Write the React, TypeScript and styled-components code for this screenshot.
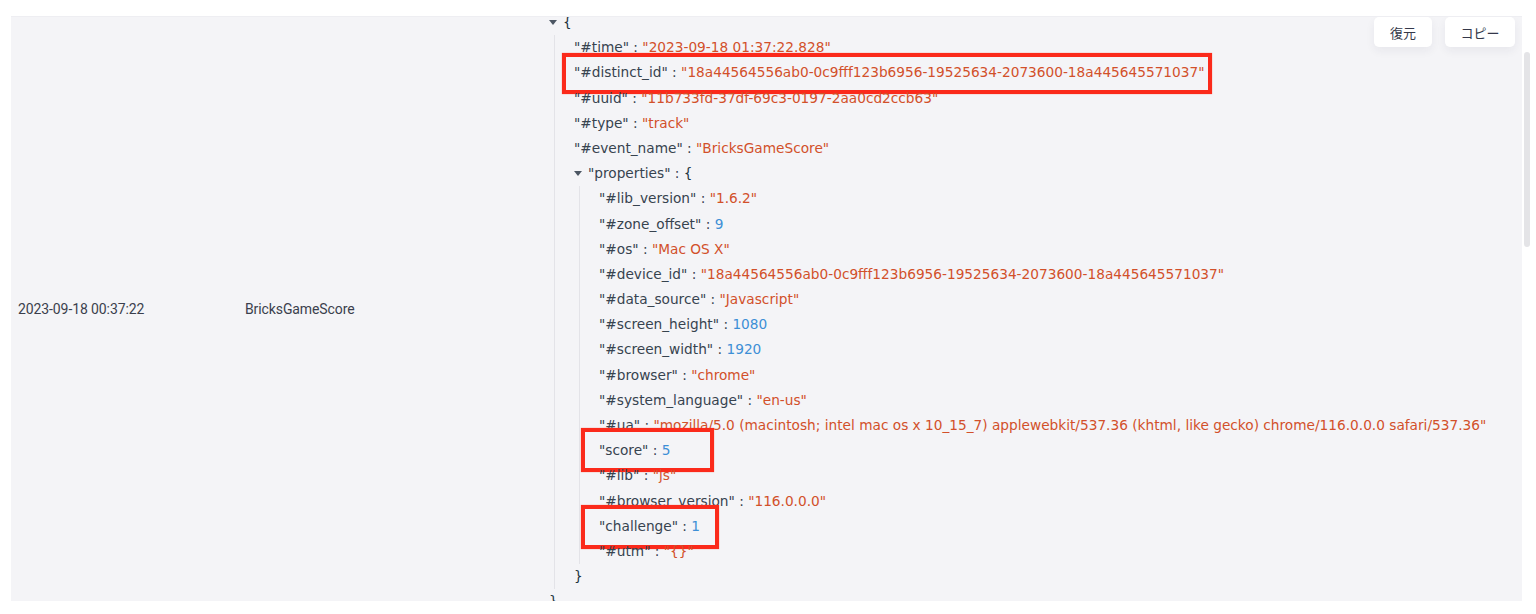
import styled, { createGlobalStyle } from "styled-components";

const GlobalStyle = createGlobalStyle`
    html, body {
        margin: 0;
        padding: 0;
        background: #ffffff;
    }
    body {
        font-family: Roboto, "Noto Sans", "Noto Sans CJK JP", sans-serif;
    }
`

const Page = styled.div`
    display: flex;
    height: 614px;
    padding: 16px 0 13px 11px;
    box-sizing: border-box;
    overflow: hidden;
`

const Panel = styled.div`
    position: relative;
    flex: 1;
    background: #f4f4f7;
    border-top: 1px solid #eeeef2;
    overflow: hidden;
`

const ScrollTrack = styled.div`
    width: 14px;
    padding: 36px 0 0 2px;
    box-sizing: border-box;
`

const ScrollThumb = styled.div`
    width: 6px;
    height: 195px;
    border-radius: 3px;
    background: #e4e4e7;
`

const Row = styled.div`
    display: grid;
    grid-template-columns: 227px 304px 1fr;
    grid-template-rows: 100%;
    align-items: center;
    height: 100%;
    padding-left: 7px;
`

const Cell = styled.div`
    font-size: 14px;
    color: #3b3f4d;
    letter-spacing: -0.1px;
`

const Actions = styled.div`
    position: absolute;
    top: 0;
    right: 7px;
    display: flex;
    gap: 13px;
`

const ActionButton = styled.button<{ w: number }>`
    width: ${props => props.w}px;
    height: 30px;
    border: none;
    border-radius: 5px;
    background: #ffffff;
    box-shadow: 0 4px 10px rgba(30, 30, 60, 0.06);
    font-family: "Noto Sans CJK JP", sans-serif;
    font-size: 13px;
    color: #34384a;
    cursor: pointer;
`

const Tree = styled.div`
    margin-top: -7px;
    align-self: start;
    font-family: "DejaVu Sans", sans-serif;
    font-size: 13.7px;
    line-height: 25.2px;
    color: #37434f;
    white-space: nowrap;
`

const Line = styled.div`
    height: 25.2px;
`

const LineText = styled.span`
    position: relative;
    display: inline-block;
`

const Arrow = styled.span`
    display: inline-block;
    width: 0;
    height: 0;
    margin: 0 6px 2px 0;
    border-left: 4px solid transparent;
    border-right: 4px solid transparent;
    border-top: 5px solid #4c5663;
    vertical-align: middle;
`

const Children = styled.div`
    margin-left: 5px;
    padding-left: 19px;
    border-left: 1px solid #e3e3e8;
`

const Brace = styled.span`
    color: #22333d;
`

const Key = styled.span`
    color: #37434f;
`

const Colon = styled.span`
    color: #37434f;
`

const Str = styled.span`
    color: #d2502a;
`

const Num = styled.span`
    color: #3d8fd6;
`

const Mark = styled.span<{ l: number; r: number; t: number; b: number }>`
    position: absolute;
    left: ${props => props.l}px;
    right: ${props => props.r}px;
    top: ${props => props.t}px;
    bottom: ${props => props.b}px;
    border: 4px solid #fb2a1b;
    box-shadow: 0 0 1px rgba(251, 42, 27, 0.6);
    pointer-events: none;
`

type Box = { l: number; r: number; t: number; b: number }
type Entry = { k: string; v: string | number; box?: Box }

const top: Entry[] = [
    { k: "#time", v: "2023-09-18 01:37:22.828" },
    { k: "#distinct_id", v: "18a44564556ab0-0c9fff123b6956-19525634-2073600-18a445645571037", box: { l: -12, r: -8, t: -7, b: -8 } },
    { k: "#uuid", v: "11b733fd-37df-69c3-0197-2aa0cd2ccb63" },
    { k: "#type", v: "track" },
    { k: "#event_name", v: "BricksGameScore" },
]

const props: Entry[] = [
    { k: "#lib_version", v: "1.6.2" },
    { k: "#zone_offset", v: 9 },
    { k: "#os", v: "Mac OS X" },
    { k: "#device_id", v: "18a44564556ab0-0c9fff123b6956-19525634-2073600-18a445645571037" },
    { k: "#data_source", v: "Javascript" },
    { k: "#screen_height", v: 1080 },
    { k: "#screen_width", v: 1920 },
    { k: "#browser", v: "chrome" },
    { k: "#system_language", v: "en-us" },
    { k: "#ua", v: "mozilla/5.0 (macintosh; intel mac os x 10_15_7) applewebkit/537.36 (khtml, like gecko) chrome/116.0.0.0 safari/537.36" },
    { k: "score", v: 5, box: { l: -18, r: -44, t: -10, b: -9 } },
    { k: "#lib", v: "js" },
    { k: "#browser_version", v: "116.0.0.0" },
    { k: "challenge", v: 1, box: { l: -18, r: -19, t: -9, b: -10 } },
    { k: "#utm", v: "{}" },
]

function Pair({ e }: { e: Entry }) {
    return (
        <Line>
            <LineText>
                <Key>"{e.k}"</Key>
                <Colon> : </Colon>
                {typeof e.v === "number" ? <Num>{e.v}</Num> : <Str>"{e.v}"</Str>}
                {e.box && <Mark {...e.box} />}
            </LineText>
        </Line>
    )
}

export default function App() {
    return (
        <>
            <GlobalStyle />
            <Page>
                <Panel>
                    <Row>
                        <Cell>2023-09-18 00:37:22</Cell>
                        <Cell>BricksGameScore</Cell>
                        <Tree>
                            <Line><Arrow /><Brace>{"{"}</Brace></Line>
                            <Children>
                                {top.map(e => <Pair key={e.k} e={e} />)}
                                <Line><Arrow /><Key>"properties"</Key><Colon> : </Colon><Brace>{"{"}</Brace></Line>
                                <Children>
                                    {props.map(e => <Pair key={e.k} e={e} />)}
                                </Children>
                                <Line><Brace>{"}"}</Brace></Line>
                            </Children>
                            <Line><Brace>{"}"}</Brace></Line>
                        </Tree>
                    </Row>
                    <Actions>
                        <ActionButton w={58}>復元</ActionButton>
                        <ActionButton w={70}>コピー</ActionButton>
                    </Actions>
                </Panel>
                <ScrollTrack>
                    <ScrollThumb />
                </ScrollTrack>
            </Page>
        </>
    )
}
